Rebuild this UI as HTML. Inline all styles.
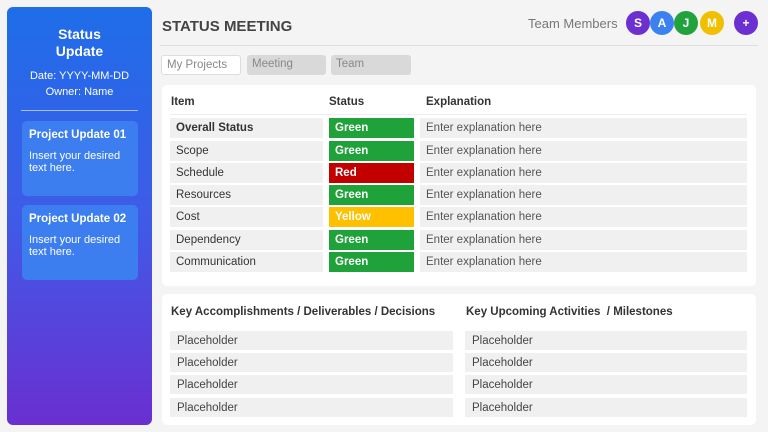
<!DOCTYPE html>
<html><head><meta charset="utf-8"><style>
*{margin:0;padding:0;box-sizing:border-box}
body{width:768px;height:432px;background:#f4f4f4;font-family:"Liberation Sans",sans-serif;position:relative;overflow:hidden;color:#333}
.side{position:absolute;left:7px;top:7px;width:145px;height:418px;border-radius:6px;background:linear-gradient(#1e6de9,#3f5be8 50%,#6a2fd0);color:#fff;text-align:center}
.side h1{font-size:14px;line-height:17px;margin-top:19px;font-weight:bold}
.side .d{font-size:11px;margin-top:8px;line-height:16px}
.side hr{border:0;border-top:1px solid #a9c0f5;margin:10px 14px 0}
.pc{position:absolute;left:15px;width:116px;height:75px;background:#3c7ef0;border-radius:5px;text-align:left;padding:8px 7px;font-size:11px}
.pc b{display:block;margin-bottom:9px;font-size:11.5px}
.title{position:absolute;left:162px;top:18px;font-size:15px;font-weight:bold;color:#444}
.line{position:absolute;left:160px;top:45px;width:598px;border-top:1px solid #ddd}
.tm{position:absolute;left:528px;top:16px;font-size:13px;color:#777}
.av{position:absolute;top:11px;width:24px;height:24px;border-radius:50%;color:#fff;font-size:12px;font-weight:bold;text-align:center;line-height:24px}
.tab{position:absolute;top:55px;height:20px;font-size:11.5px;color:#888;padding:3px 5px;border-radius:3px;background:#d9d9d9}
.card{position:absolute;left:162px;width:594px;background:#fff;border-radius:5px}
.th{position:absolute;top:96px;font-size:11.5px;font-weight:bold}
.row{position:absolute;left:170px;width:577px;height:20px;font-size:11.5px;line-height:20px}
.row .i{position:absolute;left:0;width:153px;height:20px;background:#f0f0f0;padding-left:6px}
.row .s{position:absolute;left:159px;width:85px;height:20px;color:#fff;font-weight:bold;padding-left:6px}
.row .e{position:absolute;left:250px;width:327px;height:20px;background:#f0f0f0;padding-left:6px;color:#555}
.g{background:#20a23a}.r{background:#c30000}.y{background:#ffc000}
.ph{position:absolute;height:19px;background:#f0f0f0;font-size:11.5px;line-height:19px;padding-left:7px;padding-top:1px;color:#444}
.kh{position:absolute;top:306px;font-size:11.5px;font-weight:bold}
</style></head><body>
<div class="side">
<h1>Status<br>Update</h1>
<div class="d">Date: YYYY-MM-DD<br>Owner: Name</div>
<hr>
<div class="pc" style="top:114px"><b>Project Update 01</b>Insert your desired text here.</div>
<div class="pc" style="top:198px"><b>Project Update 02</b>Insert your desired text here.</div>
</div>
<div class="title">STATUS MEETING</div>
<div class="tm">Team Members</div>
<div class="av" style="left:626px;background:#6c2fd0">S</div>
<div class="av" style="left:650px;background:#3b82f0">A</div>
<div class="av" style="left:674px;background:#22a23c">J</div>
<div class="av" style="left:700px;background:#f0c000">M</div>
<div class="av" style="left:734px;background:#6c2fd0">+</div>
<div class="line"></div>
<div class="tab" style="left:161px;width:80px;background:#fff;border:1px solid #ddd">My Projects</div>
<div class="tab" style="left:247px;width:79px">Meeting</div>
<div class="tab" style="left:331px;width:80px">Team</div>
<div class="card" style="top:85px;height:201px"></div>
<div class="th" style="left:171px">Item</div>
<div class="th" style="left:329px">Status</div>
<div class="th" style="left:426px">Explanation</div>
<div style="position:absolute;left:170px;top:114px;width:577px;border-top:1px solid #eee"></div>
<div class="row" style="top:118px"><div class="i"><b>Overall Status</b></div><div class="s g">Green</div><div class="e">Enter explanation here</div></div>
<div class="row" style="top:141px"><div class="i">Scope</div><div class="s g">Green</div><div class="e">Enter explanation here</div></div>
<div class="row" style="top:163px"><div class="i">Schedule</div><div class="s r">Red</div><div class="e">Enter explanation here</div></div>
<div class="row" style="top:185px"><div class="i">Resources</div><div class="s g">Green</div><div class="e">Enter explanation here</div></div>
<div class="row" style="top:207px"><div class="i">Cost</div><div class="s y">Yellow</div><div class="e">Enter explanation here</div></div>
<div class="row" style="top:230px"><div class="i">Dependency</div><div class="s g">Green</div><div class="e">Enter explanation here</div></div>
<div class="row" style="top:252px"><div class="i">Communication</div><div class="s g">Green</div><div class="e">Enter explanation here</div></div>
<div class="card" style="top:294px;height:131px"></div>
<div class="kh" style="left:171px">Key Accomplishments / Deliverables / Decisions</div>
<div class="kh" style="left:466px">Key Upcoming Activities &nbsp;/ Milestones</div>
<div class="ph" style="left:170px;top:331px;width:283px">Placeholder</div>
<div class="ph" style="left:170px;top:353px;width:283px">Placeholder</div>
<div class="ph" style="left:170px;top:375px;width:283px">Placeholder</div>
<div class="ph" style="left:170px;top:398px;width:283px">Placeholder</div>
<div class="ph" style="left:465px;top:331px;width:282px">Placeholder</div>
<div class="ph" style="left:465px;top:353px;width:282px">Placeholder</div>
<div class="ph" style="left:465px;top:375px;width:282px">Placeholder</div>
<div class="ph" style="left:465px;top:398px;width:282px">Placeholder</div>
</body></html>
